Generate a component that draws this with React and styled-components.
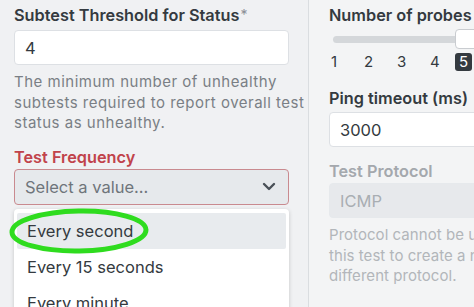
import React from 'react';
import styled, { createGlobalStyle } from 'styled-components';

const GlobalStyle = createGlobalStyle`
  html, body {
    margin: 0;
    padding: 0;
    background: #f1f2f4;
    font-family: Inter, "Liberation Sans", sans-serif;
    color: #343a40;
  }
`;

const Page = styled.div`
  display: grid;
  grid-template-columns: 308px 1fr;
  height: 307px;
  overflow: hidden;
`;

const Panel = styled.div`
  display: flex;
  flex-direction: column;
  padding: ${p => (p.$right ? '4px 0 0 20px' : '4px 19px 0 14px')};
  background: ${p => (p.$right ? '#f3f4f5' : '#f0f1f3')};
  border-left: ${p => (p.$right ? '1px solid #dadde0' : 'none')};
  overflow: hidden;
  white-space: nowrap;

  & > * {
    flex-shrink: 0;
  }
`;

const Label = styled.div`
  font-size: 16.3px;
  font-weight: 600;
  line-height: 22px;
  margin-top: ${p => p.$gap || 0}px;
  color: ${p => (p.$error ? '#c1434b' : p.$disabled ? '#a4a8ad' : '#343a40')};
`;

const Req = styled.span`
  color: #8a8f95;
  font-weight: 400;
  font-size: 14px;
  vertical-align: top;
  margin-left: 1px;
`;

const Input = styled.div`
  box-sizing: border-box;
  height: 35px;
  width: ${p => p.$width || 'auto'};
  margin-top: ${p => p.$gap || 4}px;
  padding: 0 10px;
  display: flex;
  align-items: center;
  font-size: 16.5px;
  border-radius: 4px;
  border: 1px solid ${p => (p.$disabled ? '#e6e9ec' : '#dde0e4')};
  background: ${p => (p.$disabled ? '#e7e9ec' : '#ffffff')};
  color: ${p => (p.$disabled ? '#a9aeb3' : '#343a40')};
`;

const Help = styled.div`
  font-size: 15px;
  letter-spacing: ${p => (p.$disabled ? '0.05px' : '0.5px')};
  line-height: 20.5px;
  margin-top: 7px;
  color: ${p => (p.$disabled ? '#b2b6ba' : '#7a7f85')};
`;

const Select = styled.div`
  box-sizing: border-box;
  height: 36px;
  margin-top: 1px;
  padding: 0 12px 0 10px;
  display: flex;
  align-items: center;
  justify-content: space-between;
  font-size: 16.5px;
  color: #6f757b;
  background: #e6e9ec;
  border: 1.5px solid #c98a8f;
  border-radius: 4px;
`;

const MenuWrap = styled.div`
  position: relative;
  margin-top: 4px;
`;

const Menu = styled.div`
  background: #ffffff;
  border-radius: 4px;
  box-shadow: 0 1px 4px rgba(0, 0, 0, 0.18);
  padding: 4px 3px;
  height: 120px;
`;

const Option = styled.div`
  height: 36px;
  display: flex;
  align-items: center;
  padding-left: 10px;
  font-size: 16.5px;
  color: #343a40;
  border-radius: 2px;
  background: ${p => (p.$active ? '#e8ebee' : 'transparent')};
`;

const Circle = styled.svg`
  position: absolute;
  left: -7px;
  top: -2px;
`;

const Slider = styled.div`
  position: relative;
  height: 22px;
  margin-top: 2px;
  display: flex;
  align-items: center;
`;

const Track = styled.div`
  width: 128px;
  height: 7px;
  margin-left: 4px;
  border-radius: 4px;
  background: #d4d7da;
`;

const Thumb = styled.div`
  position: absolute;
  left: 126px;
  top: 1px;
  width: 26px;
  height: 20px;
  box-sizing: border-box;
  background: #ffffff;
  border: 1px solid #c9ccd0;
  border-radius: 4px;
`;

const Ticks = styled.div`
  display: flex;
  align-items: center;
  margin-top: 3px;
  height: 18px;
`;

const Tick = styled.span`
  width: ${p => (p.$active ? 'auto' : '33px')};
  box-sizing: border-box;
  padding: ${p => (p.$active ? '0 4px' : '0 0 0 2px')};
  margin-left: ${p => (p.$active ? '-6px' : '0')};
  font-size: 15px;
  line-height: 18px;
  border-radius: 3px;
  color: ${p => (p.$active ? '#ffffff' : '#343a40')};
  background: ${p => (p.$active ? '#343a40' : 'transparent')};
`;

const Chevron = () => (
  <svg width="14" height="9" viewBox="0 0 14 9" fill="none">
    <path d="M2 2l5 5 5-5" stroke="#495057" strokeWidth="2.4" strokeLinecap="round" strokeLinejoin="round" />
  </svg>
);

export default function App() {
  return (
    <>
      <GlobalStyle />
      <Page>
        <Panel>
          <Label>
            Subtest Threshold for Status<Req>*</Req>
          </Label>
          <Input>4</Input>
          <Help>
            The minimum number of unhealthy
            <br />
            subtests required to report overall test
            <br />
            status as unhealthy.
          </Help>
          <Label $error $gap={12}>Test Frequency</Label>
          <Select>
            <span>Select a value...</span>
            <Chevron />
          </Select>
          <MenuWrap>
            <Menu>
              <Option $active>Every second</Option>
              <Option>Every 15 seconds</Option>
              <Option>Every minute</Option>
            </Menu>
            <Circle width="144" height="50" viewBox="0 0 144 50">
              <ellipse cx="72" cy="24" rx="67" ry="20" fill="none" stroke="#2fdc1f" strokeWidth="5" transform="rotate(-1 72 24)" />
            </Circle>
          </MenuWrap>
        </Panel>
        <Panel $right>
          <Label>Number of probes</Label>
          <Slider>
            <Track />
            <Thumb />
          </Slider>
          <Ticks>
            <Tick>1</Tick>
            <Tick>2</Tick>
            <Tick>3</Tick>
            <Tick>4</Tick>
            <Tick $active>5</Tick>
          </Ticks>
          <Label $gap={16}>Ping timeout (ms)</Label>
          <Input $width="220px" $gap={3}>3000</Input>
          <Label $disabled $gap={13}>Test Protocol</Label>
          <Input $disabled $width="220px" $gap={1}>ICMP</Input>
          <Help $disabled>
            Protocol cannot be updated. Clone
            <br />
            this test to create a new test with a
            <br />
            different protocol.
          </Help>
        </Panel>
      </Page>
    </>
  );
}
